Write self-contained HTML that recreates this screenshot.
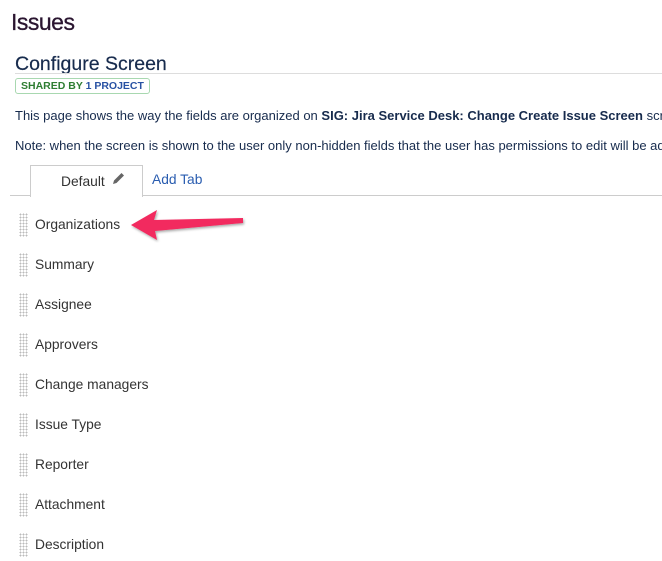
<!DOCTYPE html>
<html><head><meta charset="utf-8"><style>
body{margin:0;width:662px;height:561px;overflow:hidden;background:#fff;font-family:"Liberation Sans",sans-serif;color:#172b4d;position:relative}
.a{position:absolute;white-space:nowrap}
.grip{position:absolute;left:19px;width:9px;height:24px;background-image:radial-gradient(#bbb 0.9px,transparent 1px);background-size:3px 3px}
.f{position:absolute;left:35px;font-size:13.8px;color:#333}
</style></head><body>
<div class="a" style="left:11px;top:9px;font-size:23px;color:#2a1530;letter-spacing:-0.5px;-webkit-text-stroke:0.3px #2a1530">Issues</div>
<div class="a" style="left:15px;top:53px;font-size:19.5px;color:#172b4d;-webkit-text-stroke:0.2px #172b4d">Configure Screen</div>
<div class="a" style="left:15px;top:73px;width:647px;border-top:1px solid #ddd"></div>
<div class="a" style="left:15px;top:78px;height:14px;padding:0 5px;border:1px solid #a8d8b0;border-radius:3px;font-size:10.5px;font-weight:bold;line-height:14px;color:#2e7d32">SHARED BY <span style="color:#2952a3">1 PROJECT</span></div>
<div class="a" style="left:15px;top:108px;font-size:13px;color:#172b4d">This page shows the way the fields are organized on <b>SIG: Jira Service Desk: Change Create Issue Screen</b> screen.</div>
<div class="a" style="left:15px;top:138px;font-size:13px;color:#172b4d">Note: when the screen is shown to the user only non-hidden fields that the user has permissions to edit will be added.</div>
<div class="a" style="left:10px;top:195px;width:652px;border-top:1px solid #ccc"></div>
<div class="a" style="left:30px;top:165px;width:111px;height:31px;border:1px solid #ccc;border-bottom:none;background:#fff"></div>
<div class="a" style="left:61px;top:174px;font-size:13.8px;color:#333">Default</div>
<svg class="a" style="left:111px;top:171px" width="15" height="15" viewBox="0 0 15 15"><path d="M2 13 L3 9.5 L10.5 2 L13 4.5 L5.5 12 Z" fill="#666"/></svg>
<div class="a" style="left:152px;top:172px;font-size:13.8px;color:#2a5db0">Add Tab</div>
<div class="grip" style="top:213px"></div><div class="f" style="top:217px">Organizations</div>
<div class="grip" style="top:253px"></div><div class="f" style="top:257px">Summary</div>
<div class="grip" style="top:293px"></div><div class="f" style="top:297px">Assignee</div>
<div class="grip" style="top:333px"></div><div class="f" style="top:337px">Approvers</div>
<div class="grip" style="top:373px"></div><div class="f" style="top:377px">Change managers</div>
<div class="grip" style="top:413px"></div><div class="f" style="top:417px">Issue Type</div>
<div class="grip" style="top:453px"></div><div class="f" style="top:457px">Reporter</div>
<div class="grip" style="top:493px"></div><div class="f" style="top:497px">Attachment</div>
<div class="grip" style="top:533px"></div><div class="f" style="top:537px">Description</div>
<svg class="a" style="left:125px;top:205px" width="125" height="40" viewBox="0 0 125 40">
<defs><filter id="s"><feDropShadow dx="1" dy="1.5" stdDeviation="1.2" flood-opacity="0.35"/></filter></defs>
<path d="M6 20 L32 5 L29 15 L118 13 L118 18 L30 26 L32 35 Z" fill="#f2295f" filter="url(#s)"/>
</svg>
</body></html>
